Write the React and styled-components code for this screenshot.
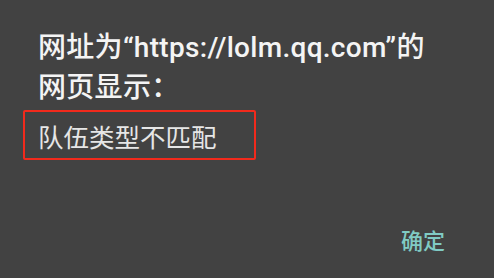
import React from 'react';
import styled, { createGlobalStyle } from 'styled-components';

const GlobalStyle = createGlobalStyle`
  html, body {
    margin: 0;
    padding: 0;
    background: #424242;
  }
  body {
    font-family: Roboto, "Noto Sans CJK SC", sans-serif;
  }
`;

const Dialog = styled.div`
  width: 494px;
  height: 278px;
  box-sizing: border-box;
  background: #424242;
  display: flex;
  flex-direction: column;
  padding: 28px 49px 0 23px;
`;

const Title = styled.div`
  color: #f4f4f4;
  font-size: 28px;
  font-weight: 500;
  letter-spacing: 0.3px;
  line-height: 40px;
  padding-left: 15px;
  white-space: nowrap;
`;

const Message = styled.div`
  margin-top: 2px;
  width: 233px;
  height: 50px;
  box-sizing: border-box;
  border: 2px solid #f22a1c;
  border-radius: 2px;
  display: flex;
  align-items: center;
  padding-left: 13px;
  color: #e6e6e6;
  font-size: 25.5px;
`;

const Actions = styled.div`
  display: flex;
  justify-content: flex-end;
  margin-top: 70px;
`;

const Button = styled.button`
  background: none;
  border: none;
  padding: 0;
  font-family: inherit;
  font-size: 22px;
  font-weight: 500;
  line-height: 24px;
  color: #80cbc4;
`;

export default function App() {
  return (
    <>
      <GlobalStyle />
      <Dialog>
        <Title>
          网址为“https://lolm.qq.com”的
          <br />
          网页显示：
        </Title>
        <Message>队伍类型不匹配</Message>
        <Actions>
          <Button>确定</Button>
        </Actions>
      </Dialog>
    </>
  );
}
